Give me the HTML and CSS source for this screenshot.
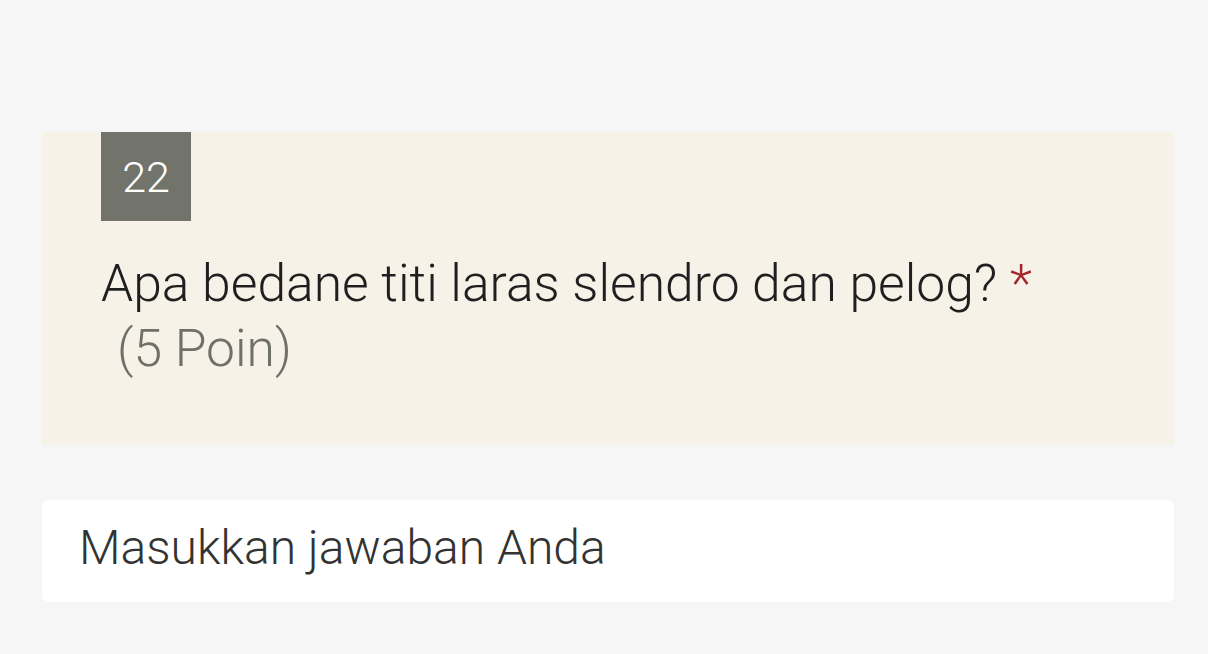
FILE: index.html
```html
<!DOCTYPE html>
<html lang="id">
<head>
<meta charset="utf-8">
<title>Pertanyaan 22</title>
<link rel="stylesheet" href="styles.css">
</head>
<body>
<div class="page">
  <div class="question-card">
    <div class="number-badge">22</div>
    <div class="question-title">
      <span class="question-text">Apa bedane titi laras slendro dan pelog?</span> <span class="required">*</span>
    </div>
    <div class="question-points">(5 Poin)</div>
  </div>
  <div class="answer-box">Masukkan jawaban Anda</div>
</div>
</body>
</html>
```

FILE: styles.css
```css
html, body {
  margin: 0;
  padding: 0;
}
body {
  background: #f6f6f6;
  font-family: Roboto, "Noto Sans", "Liberation Sans", sans-serif;
  width: 1208px;
  height: 654px;
  overflow: hidden;
}
.page {
  padding: 132px 34px 0 42px;
}
.question-card {
  background: #f6f2e8;
  padding: 0 0 64px 59px;
}
.number-badge {
  width: 90px;
  height: 89px;
  background: #72736a;
  color: #ffffff;
  font-size: 43px;
  font-weight: 300;
  display: flex;
  align-items: center;
  justify-content: center;
}
.question-title {
  margin-top: 30px;
  font-size: 51.6px;
  line-height: 65px;
  font-weight: 300;
  color: #1f1f1f;
}
.required {
  color: #a4262c;
}
.question-points {
  font-size: 51.6px;
  line-height: 65px;
  font-weight: 300;
  color: #6f7068;
  padding-left: 16px;
}
.answer-box {
  margin-top: 55px;
  background: #ffffff;
  border-radius: 7px;
  height: 102px;
  line-height: 96px;
  padding-left: 37px;
  font-size: 48px;
  font-weight: 300;
  color: #333333;
}
```
